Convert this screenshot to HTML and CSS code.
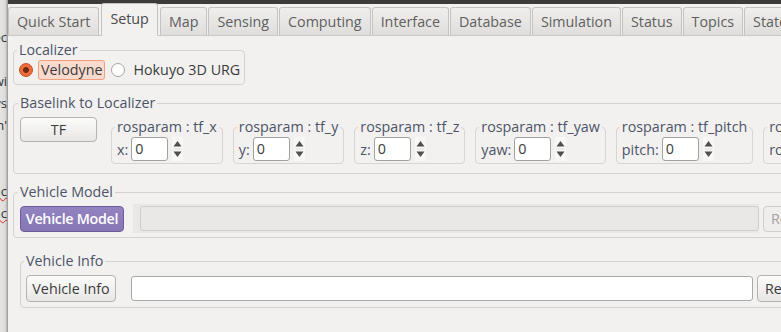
FILE: index.html
```html
<!DOCTYPE html>
<html>
<head>
  <meta charset="utf-8">
  <title>Runtime Manager - Setup</title>
  <link rel="stylesheet" href="styles.css">
</head>
<body>
  <div class="screen">
    <!-- slice of the window behind -->
    <div class="behind">
      <div class="frag">Spec</div>
      <div class="frag"></div>
      <div class="frag">wi</div>
      <div class="frag">vs</div>
      <div class="frag">n'</div>
      <div class="frag"></div>
      <div class="frag"></div>
      <div class="frag spell">ac</div>
      <div class="frag spell">ac</div>
    </div>

    <div class="window">
      <div class="titlebar"></div>

      <div class="tabs">
        <div class="tab">Quick Start</div>
        <div class="tab active">Setup</div>
        <div class="tab">Map</div>
        <div class="tab">Sensing</div>
        <div class="tab">Computing</div>
        <div class="tab">Interface</div>
        <div class="tab">Database</div>
        <div class="tab">Simulation</div>
        <div class="tab">Status</div>
        <div class="tab">Topics</div>
        <div class="tab">State</div>
      </div>

      <div class="panel">
        <fieldset class="group localizer">
          <legend>Localizer</legend>
          <div class="radios">
            <label class="radio checked"><span class="dot"></span><span class="radio-text">Velodyne</span></label>
            <label class="radio"><span class="dot"></span><span class="radio-text">Hokuyo 3D URG</span></label>
          </div>
        </fieldset>

        <fieldset class="group wide baselink">
          <legend>Baselink to Localizer</legend>
          <div class="tf-row" id="tfRow">
            <button class="btn btn-tf">TF</button>
          </div>
        </fieldset>

        <fieldset class="group wide vehicle-model">
          <legend>Vehicle Model</legend>
          <div class="field-row">
            <button class="btn btn-purple">Vehicle Model</button>
            <div class="field-wrap"><div class="field disabled"></div></div>
            <button class="btn btn-ref disabled">Ref</button>
          </div>
        </fieldset>

        <fieldset class="group wide vehicle-info">
          <legend>Vehicle Info</legend>
          <div class="field-row">
            <button class="btn btn-info">Vehicle Info</button>
            <div class="field"></div>
            <button class="btn btn-ref">Ref</button>
          </div>
        </fieldset>
      </div>
    </div>
  </div>

  <script>
    const params = [
      { name: 'tf_x', label: 'x' },
      { name: 'tf_y', label: 'y' },
      { name: 'tf_z', label: 'z' },
      { name: 'tf_yaw', label: 'yaw' },
      { name: 'tf_pitch', label: 'pitch' },
      { name: 'tf_roll', label: 'roll' }
    ];

    const arrows = `
      <svg class="spin-arrows" width="11" height="24" viewBox="0 0 11 24">
        <polygon points="1.5,9.5 5.5,4 9.5,9.5" />
        <line x1="1.5" y1="12" x2="9.5" y2="12" />
        <polygon points="1.5,14.5 5.5,20 9.5,14.5" />
      </svg>`;

    function createParamGroup(param) {
      return `
        <fieldset class="sub">
          <legend>rosparam : ${param.name}</legend>
          <div class="spin-row">
            <span class="spin-label">${param.label}:</span>
            <span class="spin-input">0</span>
            ${arrows}
          </div>
        </fieldset>`;
    }

    document.getElementById('tfRow')
      .insertAdjacentHTML('beforeend', params.map(createParamGroup).join(''));
  </script>
</body>
</html>
```

FILE: styles.css
```css
body {
  margin: 0;
  font-family: "Open Sans", "DejaVu Sans", sans-serif;
  font-size: 14.3px;
  color: #3c3c3c;
  background: #f2f1f0;
  overflow: hidden;
}

.screen {
  display: flex;
  width: 781px;
  height: 332px;
  overflow: hidden;
}

/* window behind, only its right edge shows */
.behind {
  flex: none;
  width: 8px;
  padding-top: 26px;
  overflow: hidden;
  background: linear-gradient(to right, #e4e4e3 0, #dcdcdb 5px, #b4b4b4 7px, #8c8c8c 8px);
}

.frag {
  display: flex;
  justify-content: flex-end;
  height: 22px;
  line-height: 22px;
  font-size: 13px;
  color: #333;
  white-space: nowrap;
  padding-right: 1px;
}

.frag.spell {
  text-decoration: underline wavy #d22;
  text-decoration-thickness: 1px;
}

.window {
  flex: 1;
  min-width: 0;
  display: flex;
  flex-direction: column;
}

.titlebar {
  height: 4px;
  background: #3c3b37;
}

.tabs {
  display: flex;
  align-items: flex-end;
  gap: 1px;
  height: 31px;
  border-bottom: 1px solid #c9c8c6;
}

.tab {
  flex: none;
  height: 27px;
  line-height: 27px;
  padding: 0 8px;
  border: 1px solid #c4c3c1;
  border-bottom: none;
  border-radius: 3px 3px 0 0;
  background: linear-gradient(#efeeec, #dfdedc);
  color: #5f5f5f;
  white-space: nowrap;
}

.tab.active {
  height: 32px;
  line-height: 30px;
  margin: 0 1px -1px;
  background: #f2f1f0;
  color: #4a4a4a;
}

.panel {
  flex: 1;
  padding: 6px 0 0 5px;
  overflow: hidden;
}

.group {
  margin: 0;
  border: 1px solid #d3d2d0;
  border-radius: 4px;
  min-width: 0;
}

legend {
  padding: 0 2px;
  margin-left: -2px;
  line-height: 16px;
  color: #4d5468;
  white-space: nowrap;
}

.wide {
  width: 800px;
  box-sizing: border-box;
}

/* Localizer */
.localizer {
  width: max-content;
  padding: 2px 1px 4px 5px;
}

.radios {
  display: flex;
  align-items: center;
  gap: 6px;
  white-space: nowrap;
}

.radio {
  display: flex;
  align-items: center;
  gap: 5px;
}

.dot {
  width: 14px;
  height: 14px;
  box-sizing: border-box;
  border-radius: 50%;
  border: 1px solid #a4a4a2;
  background: #fff;
}

.radio.checked .dot {
  border-color: #c2501f;
  background: radial-gradient(circle, #6e2a12 0 2.6px, #ee6c3e 3.2px);
}

.radio-text {
  height: 18px;
  line-height: 18px;
  padding: 0 2px;
  border: 1px solid transparent;
  border-radius: 3px;
}

.radio.checked .radio-text {
  background: #f8dbce;
  border-color: #f0a07b;
}

/* Baselink to Localizer */
.baselink {
  margin-top: 10px;
  padding: 6px 0 9px 6px;
}

.tf-row {
  display: flex;
  align-items: flex-start;
}

.btn {
  flex: none;
  font: inherit;
  color: #3c3c3c;
  padding: 0;
  border: 1px solid #b4b3b1;
  border-radius: 4px;
  background: linear-gradient(#fbfbfa, #e8e7e5);
}

.btn-tf {
  width: 77px;
  height: 25px;
  margin-right: 14px;
}

.sub {
  flex: none;
  margin: 3px 10px 0 0;
  padding: 3px 3px 2px 5px;
  border: 1px solid #d6d5d3;
  border-radius: 4px;
  min-width: 0;
}

.sub legend {
  line-height: 14px;
}

.spin-row {
  display: flex;
  align-items: center;
  color: #4d5468;
}

.spin-label {
  margin-right: 3px;
}

.spin-input {
  width: 37px;
  height: 24px;
  box-sizing: border-box;
  line-height: 22px;
  padding-left: 3px;
  background: #fff;
  border: 1px solid #a2a2a0;
  border-radius: 3px;
  color: #3c3c3c;
}

.spin-arrows {
  margin-left: 4px;
  background: #f7f7f6;
}

.spin-arrows polygon {
  fill: #4e4e4e;
}

.spin-arrows line {
  stroke: #dcdcdb;
  stroke-width: 1;
}

/* Vehicle Model / Vehicle Info */
.field-row {
  display: flex;
  align-items: center;
}

.vehicle-model {
  margin-top: 10px;
  padding: 4px 0 4px 6px;
}

.btn-purple {
  width: 104px;
  height: 26px;
  color: #fff;
  font-weight: 600;
  letter-spacing: -0.3px;
  border-color: #6c5c9c;
  background: linear-gradient(#9383c0, #8676b4);
}

.field-wrap {
  margin-left: 9px;
  padding: 2px 0 2px 7px;
  background: #e9e8e6;
}

.field {
  flex: none;
  width: 622px;
  height: 25px;
  box-sizing: border-box;
  background: #fff;
  border: 1px solid #a9a9a7;
  border-radius: 3px;
}

.field.disabled {
  width: 619px;
  background: #e9e8e6;
  border-color: #cfcecc;
}

.btn-ref {
  width: 60px;
  height: 27px;
  margin-left: 4px;
  text-align: left;
  padding-left: 7px;
}

.btn-ref.disabled {
  height: 26px;
  color: #a3a3a3;
  border-color: #cfcecc;
  background: #efeeec;
}

.vehicle-info {
  margin: 15px 0 0 7px;
  padding: 6px 0 5px 5px;
}

.btn-info {
  width: 90px;
  height: 27px;
  margin-right: 15px;
}
```
